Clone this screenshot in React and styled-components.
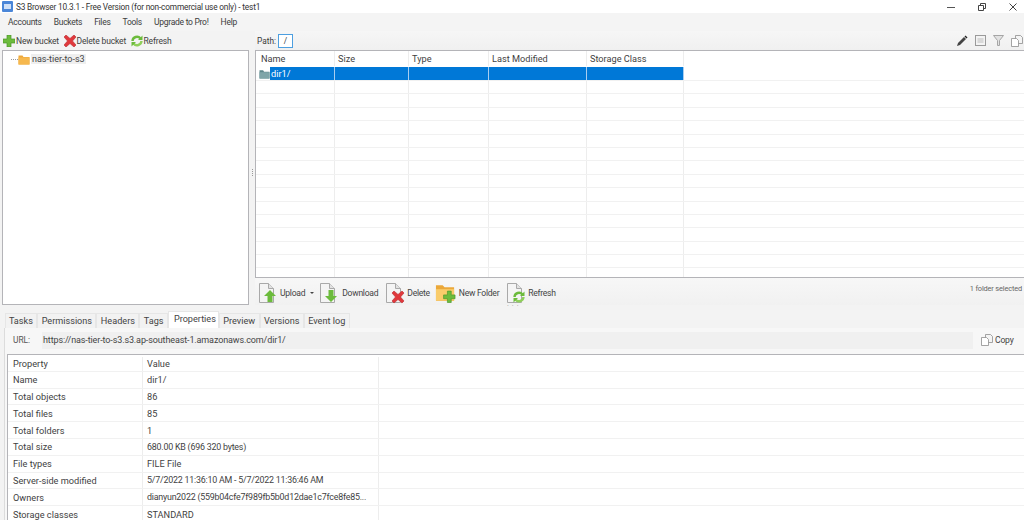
import React from "react";
import styled, { createGlobalStyle } from "styled-components";

const GlobalStyle = createGlobalStyle`
  html, body { margin: 0; padding: 0; height: 100%; overflow: hidden; background: #f3f3f3; }
  body { font-family: Roboto, "Liberation Sans", sans-serif; font-size: 9px; color: #3a3a3a; }
`;

const Window = styled.div`
  width: 1024px;
  height: 520px;
  display: flex;
  flex-direction: column;
  overflow: hidden;
`;

const TitleBar = styled.div`
  height: 13px;
  background: #fff;
  display: flex;
  align-items: center;
  padding-left: 2px;
  gap: 3px;
  font-size: 8.3px;
  letter-spacing: -0.19px;
  color: #333;
`;

const TitleText = styled.span`
  flex: 1;
`;

const WindowButtons = styled.div`
  display: flex;
  align-items: center;
  gap: 23px;
  padding-right: 7px;
  color: #444;
`;

const MenuBar = styled.div`
  height: 18px;
  background: #f4f4f4;
  display: flex;
  align-items: center;
  gap: 12px;
  padding-left: 8px;
`;

const MenuItem = styled.span`
  font-size: 8.5px;
  letter-spacing: -0.27px;
  color: #3d3d3d;
`;

const Panes = styled.div`
  height: 274px;
  display: flex;
`;

const LeftPane = styled.div`
  width: 249px;
  display: flex;
  flex-direction: column;
  padding-left: 2px;
  box-sizing: border-box;
`;

const BucketBar = styled.div`
  height: 19px;
  display: flex;
  align-items: center;
  gap: 4.5px;
  padding-left: 1px;
`;

const BarButton = styled.span`
  display: inline-flex;
  align-items: center;
  gap: 1px;
  font-size: 8.5px;
  letter-spacing: -0.15px;
  color: #404040;
`;

const TreeBox = styled.div`
  flex: 1;
  background: #fff;
  border: 1px solid #b4b4b8;
  padding: 1px 0 0 8px;
`;

const TreeNode = styled.div`
  display: flex;
  align-items: center;
  height: 14px;
`;

const TreeDash = styled.span`
  width: 7px;
  border-top: 1px dotted #999;
`;

const TreeLabel = styled.span`
  margin-left: 1px;
  padding: 0 1px;
  background: #efefef;
  font-size: 9px;
  color: #444;
`;

const Splitter = styled.div`
  width: 6px;
  display: flex;
  flex-direction: column;
  align-items: center;
  justify-content: center;
  gap: 1px;
  padding-top: 8px;
`;

const SplitDot = styled.span`
  width: 1px;
  height: 1px;
  background: #999;
`;

const RightPane = styled.div`
  flex: 1;
  min-width: 0;
  display: flex;
  flex-direction: column;
`;

const PathBar = styled.div`
  height: 19px;
  display: flex;
  align-items: center;
  background: linear-gradient(#f6f6f6, #f0f0f0);
  padding-left: 2px;
  gap: 2px;
  font-size: 8.3px;
`;

const PathInput = styled.span`
  width: 15px;
  height: 14px;
  box-sizing: border-box;
  border: 1px solid #4d9fe0;
  background: #fff;
  display: flex;
  align-items: center;
  justify-content: center;
`;

const PathSpacer = styled.span`
  flex: 1;
`;

const ViewIcons = styled.div`
  display: flex;
  align-items: center;
  gap: 7px;
  padding-right: 1px;
`;

const FileBox = styled.div`
  height: 228px;
  box-sizing: border-box;
  background: #fff;
  border: 1px solid #b4b4b8;
  border-right: none;
  overflow: hidden;
`;

const GridRow = styled.div`
  display: flex;
  height: ${(p) => p.$h}px;
  box-sizing: border-box;
  border-bottom: 1px solid ${(p) => (p.$head ? "#fff" : "#f1f1f1")};
`;

const FileCell = styled.div`
  width: ${(p) => p.$w}px;
  box-sizing: border-box;
  flex: none;
  display: flex;
  align-items: center;
  padding-left: ${(p) => p.$pad || 0}px;
  border-right: 1px solid ${(p) => (p.$selected ? "#a8cdf0" : "#ededed")};
  background: ${(p) => (p.$selected ? "#0078d7" : "transparent")};
  color: ${(p) => (p.$selected ? "#fff" : "#3f3f3f")};
  font-size: 9.2px;
`;

const NameIcon = styled.div`
  width: 14px;
  flex: none;
  display: flex;
  align-items: center;
  padding-left: 3px;
  box-sizing: border-box;
`;

const ActionBar = styled.div`
  flex: 1;
  display: flex;
  align-items: center;
  padding: 2px 2px 0 3px;
  background: linear-gradient(#f7f7f7, #f1f1f1);
  position: relative;
`;

const ActionButton = styled.span`
  display: inline-flex;
  align-items: center;
  gap: ${(p) => p.$gap}px;
  margin-right: ${(p) => p.$after}px;
  font-size: 8.6px;
  letter-spacing: -0.28px;
  color: #444;
`;

const Caret = styled.span`
  margin-left: 3px;
  width: 0;
  height: 0;
  border-left: 2px solid transparent;
  border-right: 2px solid transparent;
  border-top: 2px solid #444;
`;

const Selected = styled.span`
  margin-left: auto;
  font-size: 7.4px;
  letter-spacing: -0.15px;
  color: #666;
  margin-top: -8px;
`;

const Grip = styled.div`
  position: absolute;
  left: 252px;
  bottom: -1px;
  color: #999;
  font-size: 7px;
  letter-spacing: 3px;
  line-height: 4px;
`;

const Bottom = styled.div`
  flex: 1;
  display: flex;
  flex-direction: column;
  padding-left: 4px;
  min-height: 0;
`;

const Tabs = styled.div`
  height: 23px;
  display: flex;
  align-items: flex-end;
  padding-left: 0.5px;
  box-sizing: border-box;
`;

const Tab = styled.div`
  height: ${(p) => (p.$active ? 17 : 15)}px;
  padding: ${(p) => (p.$active ? "0 2px 3px 5px" : "0 3.4px 1px")};
  display: flex;
  align-items: center;
  box-sizing: border-box;
  background: ${(p) => (p.$active ? "#fff" : "#f2f2f2")};
  border: 1px solid #e6e6e6;
  border-bottom: none;
  font-size: 9.15px;
  color: #444;
`;

const TabBody = styled.div`
  flex: 1;
  background: #f7f7f7;
  border-left: 1px solid #dcdcdc;
  padding: 3px 0 0 2px;
  display: flex;
  flex-direction: column;
  min-height: 0;
`;

const UrlRow = styled.div`
  height: 18px;
  display: flex;
  align-items: center;
  flex: none;
`;

const UrlLabel = styled.span`
  width: 35px;
  padding-left: 6px;
  box-sizing: border-box;
  font-size: 8.4px;
  color: #555;
`;

const UrlField = styled.span`
  flex: 1;
  height: 17px;
  display: flex;
  align-items: center;
  padding-left: 1px;
  background: #f0f0f0;
  font-size: 9px;
  letter-spacing: -0.12px;
  color: #444;
`;

const CopyButton = styled.span`
  width: 51px;
  flex: none;
  display: flex;
  align-items: center;
  padding-left: 8px;
  box-sizing: border-box;
  gap: 2px;
  font-size: 8.6px;
  letter-spacing: -0.2px;
  color: #444;
`;

const PropBox = styled.div`
  margin-top: 5px;
  flex: 1;
  background: #fff;
  border: 1px solid #b4b4b8;
  border-bottom: none;
  border-right: none;
  overflow: hidden;
`;

const PropRow = styled.div`
  display: flex;
  height: 16.8px;
  box-sizing: border-box;
  border-bottom: 1px solid #f1f1f1;
  padding-top: ${(p) => (p.$head ? 2 : 0)}px;
`;

const PropCell = styled.div`
  width: ${(p) => p.$w}px;
  flex: none;
  box-sizing: border-box;
  display: flex;
  align-items: center;
  padding-left: ${(p) => p.$pad}px;
  border-right: 1px solid #ededed;
  font-size: ${(p) => (p.$tight ? 8.9 : 9.2)}px;
  letter-spacing: ${(p) => (p.$tight ? -0.22 : 0)}px;
  color: #3f3f3f;
  white-space: nowrap;
`;

/* icons */
const Page = ({ children }) => (
  <svg width="20" height="22" viewBox="0 0 20 22">
    <path d="M1.5 1.500h9l5 5v14h-14z" fill="#f4f4f4" stroke="#a9a9a9" />
    <path d="M10.500 1.500v5h5" fill="#e2e2e2" stroke="#a9a9a9" />
    {children}
  </svg>
);

const Plus = ({ x = 0, y = 0, s = 1 }) => (
  <path
    transform={`translate(${x} ${y}) scale(${s})`}
    d="M4 0h4v4h4v4H8v4H4V8H0V4h4z"
    fill="#6cbb3c"
    stroke="#4a962a"
    strokeWidth="0.7"
  />
);

const Cross = ({ x = 0, y = 0, s = 1 }) => (
  <path
    transform={`translate(${x} ${y}) scale(${s})`}
    d="M2 0l4 3.500L10 0l2 2-3.500 4L12 10l-2 2-4-3.500L2 12l-2-2 3.500-4L0 2z"
    fill="#e0383c"
    stroke="#b92a2e"
    strokeWidth="0.6"
  />
);

const Sync = ({ x = 0, y = 0, s = 1 }) => (
  <g transform={`translate(${x} ${y}) scale(${s})`} fill="none" strokeWidth="2.400">
    <path d="M1.500 6a4.500 4.500 0 0 1 8-2.500" stroke="#6cbb3c" />
    <path d="M10.500 6a4.500 4.500 0 0 1-8 2.500" stroke="#8fcf5a" />
    <path d="M11.500 0.500v4.500h-4.500z" fill="#6cbb3c" stroke="none" />
    <path d="M0.500 11.500v-4.500h4.500z" fill="#6cbb3c" stroke="none" />
  </g>
);

const Small = ({ children }) => (
  <svg width="12" height="12" viewBox="0 0 12 12">
    {children}
  </svg>
);

const Folder = ({ w = 12, h = 11, fill = "#f6b84e", tab = "#eda73a" }) => (
  <svg width={w} height={h} viewBox="0 0 12 11">
    <path d="M0.500 1.500h4l1 1.500h6v7.500h-11z" fill={tab} />
    <path d="M0.500 3.500h11v7h-11z" fill={fill} />
  </svg>
);

const Copy = ({ size = 12 }) => (
  <svg width={size} height={size} viewBox="0 0 12 12">
    <path d="M4.500 0.500h5l2 2v6h-7z" fill="#f4f4f4" stroke="#8e8e8e" strokeWidth="0.8" />
    <path d="M0.500 3.500h5l2 2v6h-7z" fill="#fff" stroke="#8e8e8e" strokeWidth="0.8" />
  </svg>
);

const columns = [
  { label: "Name", w: 79, pad: 5 },
  { label: "Size", w: 74, pad: 3 },
  { label: "Type", w: 80, pad: 3 },
  { label: "Last Modified", w: 98, pad: 3 },
  { label: "Storage Class", w: 97, pad: 3 },
];

const props = [
  { key: "Property", value: "Value" },
  { key: "Name", value: "dir1/" },
  { key: "Total objects", value: "86" },
  { key: "Total files", value: "85" },
  { key: "Total folders", value: "1" },
  { key: "Total size", value: "680.00 KB (696 320 bytes)", tight: true },
  { key: "File types", value: "FILE File" },
  { key: "Server-side modified", value: "5/7/2022 11:36:10 AM - 5/7/2022 11:36:46 AM", tight: true },
  { key: "Owners", value: "dianyun2022 (559b04cfe7f989fb5b0d12dae1c7fce8fe85...", tight: true },
  { key: "Storage classes", value: "STANDARD" },
];

const tabs = ["Tasks", "Permissions", "Headers", "Tags", "Properties", "Preview", "Versions", "Event log"];
const emptyRows = Array.from({ length: 15 }, (_, i) => i);

export default function App() {
  return (
    <Window>
      <GlobalStyle />
      <TitleBar>
        <svg width="11" height="11" viewBox="0 0 11 11">
          <rect width="11" height="11" rx="1" fill="#4a86d8" />
          <rect x="2" y="3" width="7" height="5" fill="#cfe0f7" />
        </svg>
        <TitleText>S3 Browser 10.3.1 - Free Version (for non-commercial use only) - test1</TitleText>
        <WindowButtons>
          <svg width="8" height="8" viewBox="0 0 8 8">
            <path d="M0 4.500h8" stroke="#555" />
          </svg>
          <svg width="8" height="8" viewBox="0 0 8 8">
            <path d="M0.500 2.500h5v5h-5zM2.500 2.500v-2h5v5h-2" fill="none" stroke="#444" />
          </svg>
          <svg width="8" height="8" viewBox="0 0 8 8">
            <path d="M0.500 0.500l7 7M7.500 0.500l-7 7" stroke="#444" />
          </svg>
        </WindowButtons>
      </TitleBar>
      <MenuBar>
        {["Accounts", "Buckets", "Files", "Tools", "Upgrade to Pro!", "Help"].map((m) => (
          <MenuItem key={m}>{m}</MenuItem>
        ))}
      </MenuBar>
      <Panes>
        <LeftPane>
          <BucketBar>
            <BarButton>
              <Small>
                <Plus />
              </Small>
              New bucket
            </BarButton>
            <BarButton>
              <Small>
                <Cross />
              </Small>
              Delete bucket
            </BarButton>
            <BarButton>
              <Small>
                <Sync />
              </Small>
              Refresh
            </BarButton>
          </BucketBar>
          <TreeBox>
            <TreeNode>
              <TreeDash />
              <Folder />
              <TreeLabel>nas-tier-to-s3</TreeLabel>
            </TreeNode>
          </TreeBox>
        </LeftPane>
        <Splitter>
          {[0, 1, 2, 3].map((d) => (
            <SplitDot key={d} />
          ))}
        </Splitter>
        <RightPane>
          <PathBar>
            Path:
            <PathInput>/</PathInput>
            <PathSpacer />
            <ViewIcons>
              <svg width="12" height="12" viewBox="0 0 12 12">
                <path d="M1 11l1-3 6-6 2 2-6 6z" fill="#444" />
                <path d="M8.500 1.500l1-1 2 2-1 1z" fill="#222" />
              </svg>
              <svg width="11" height="11" viewBox="0 0 11 11">
                <rect x="0.500" y="0.500" width="10" height="10" fill="#f3f3f3" stroke="#9a9a9a" />
                <rect x="2.500" y="3" width="6" height="5" fill="#d8d8d8" />
              </svg>
              <svg width="11" height="11" viewBox="0 0 11 11">
                <path d="M0.500 0.500h10l-4 5v5h-2v-5z" fill="#e2e2e2" stroke="#a5a5a5" />
              </svg>
              <Copy />
            </ViewIcons>
          </PathBar>
          <FileBox>
            <GridRow $h={16} $head>
              {columns.map((c) => (
                <FileCell key={c.label} $w={c.w} $pad={c.pad}>
                  {c.label}
                </FileCell>
              ))}
            </GridRow>
            <GridRow $h={14}>
              <NameIcon>
                <Folder w={11} h={10} fill="#7fa5a8" tab="#5f888c" />
              </NameIcon>
              {columns.map((c, i) => (
                <FileCell key={c.label} $w={i === 0 ? c.w - 14 : c.w} $pad={1} $selected>
                  {i === 0 ? "dir1/" : ""}
                </FileCell>
              ))}
            </GridRow>
            {emptyRows.map((r) => (
              <GridRow key={r} $h={13.4}>
                {columns.map((c) => (
                  <FileCell key={c.label} $w={c.w} />
                ))}
              </GridRow>
            ))}
          </FileBox>
          <ActionBar>
            <ActionButton $after={5} $gap={2}>
              <Page>
                <path d="M12 8l6 6h-3.500v6h-5v-6H6z" fill="#6cbb3c" />
              </Page>
              Upload
              <Caret />
            </ActionButton>
            <ActionButton $after={7} $gap={3}>
              <Page>
                <path d="M12 20l6-6h-3.500V8h-5v6H6z" fill="#6cbb3c" />
              </Page>
              Download
            </ActionButton>
            <ActionButton $after={5} $gap={2}>
              <Page>
                <Cross x={7} y={9} />
              </Page>
              Delete
            </ActionButton>
            <ActionButton $after={7} $gap={3}>
              <svg width="21" height="20" viewBox="0 0 22 20">
                <path d="M1 2h7l2 2h10v14H1z" fill="#eba83a" />
                <path d="M1 6h19v12H1z" fill="#f9cc6a" />
                <Plus x={9} y={8} />
              </svg>
              New Folder
            </ActionButton>
            <ActionButton $after={0} $gap={2}>
              <Page>
                <Sync x={7} y={9} />
              </Page>
              Refresh
            </ActionButton>
            <Selected>1 folder selected</Selected>
            <Grip>...</Grip>
          </ActionBar>
        </RightPane>
      </Panes>
      <Bottom>
        <Tabs>
          {tabs.map((t) => (
            <Tab key={t} $active={t === "Properties"}>
              {t}
            </Tab>
          ))}
        </Tabs>
        <TabBody>
          <UrlRow>
            <UrlLabel>URL:</UrlLabel>
            <UrlField>https://nas-tier-to-s3.s3.ap-southeast-1.amazonaws.com/dir1/</UrlField>
            <CopyButton>
              <Copy />
              Copy
            </CopyButton>
          </UrlRow>
          <PropBox>
            {props.map((p, i) => (
              <PropRow key={p.key} $head={i === 0}>
                <PropCell $w={135} $pad={5}>
                  {p.key}
                </PropCell>
                <PropCell $w={236} $pad={4} $tight={p.tight}>
                  {p.value}
                </PropCell>
              </PropRow>
            ))}
          </PropBox>
        </TabBody>
      </Bottom>
    </Window>
  );
}
